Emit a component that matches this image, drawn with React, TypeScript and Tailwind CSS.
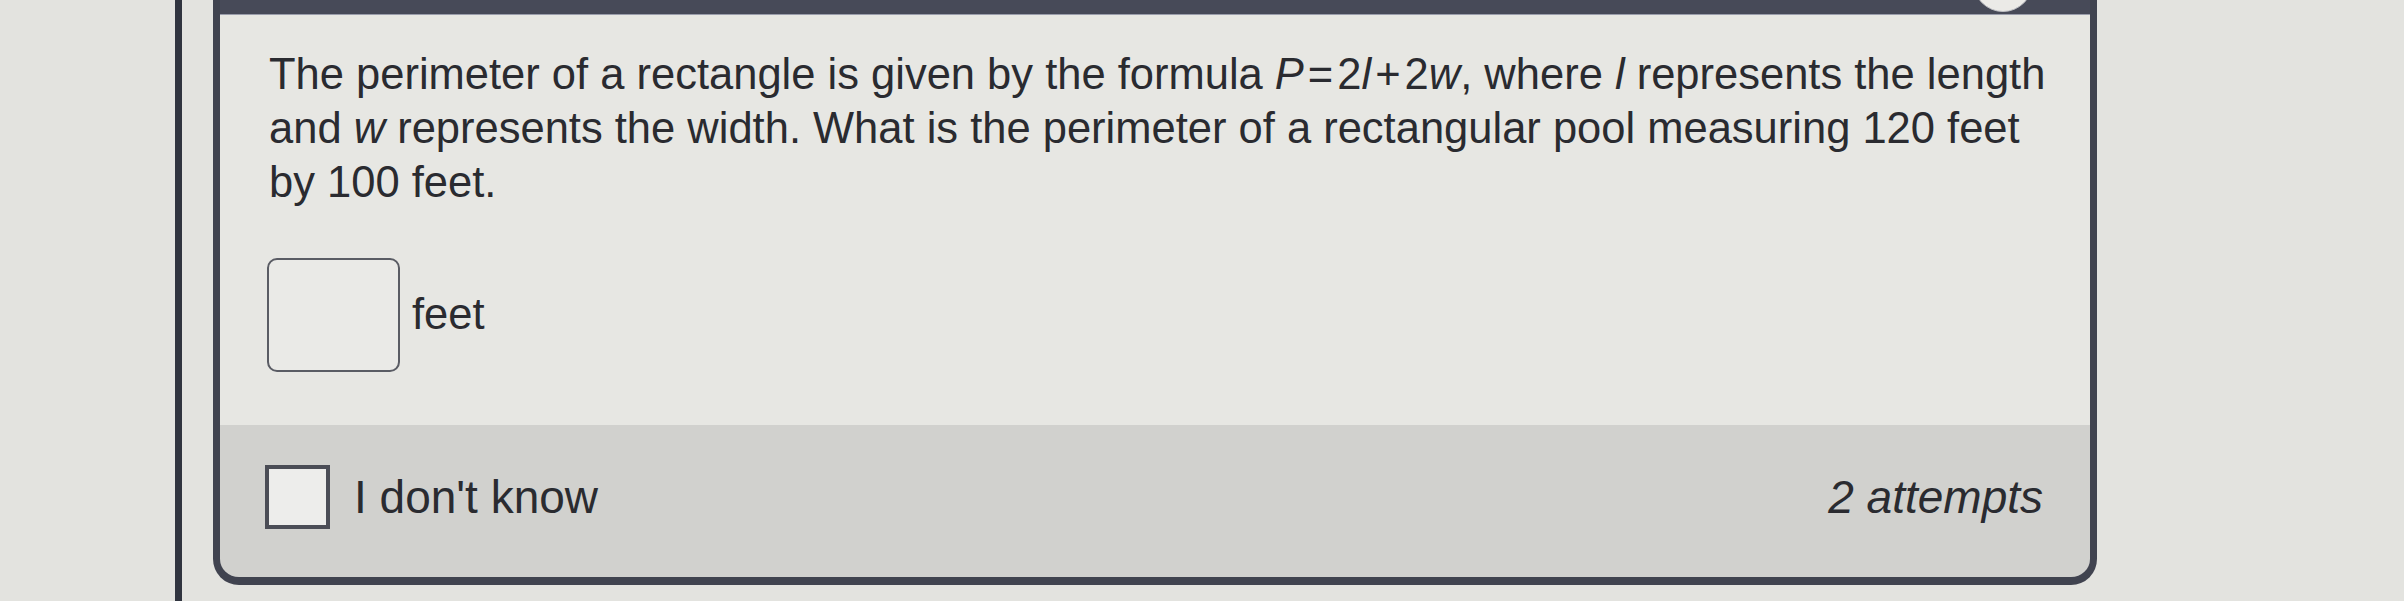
export default function App() {
  return (
    <div className="w-[2404px] h-[601px] overflow-hidden bg-[#e3e3df] flex font-['Liberation_Sans',Arial,sans-serif] text-[#2a2b30]">
      <div className="w-[175px] shrink-0" />
      <div className="w-[7px] shrink-0 bg-[#30343f]" />
      <div className="w-[31px] shrink-0" />
      <QuestionCard />
    </div>
  );
}

function QuestionCard() {
  return (
    <div className="w-[1884px] shrink-0 self-start -mt-[30px] bg-[#474a58] border-x-[7px] border-b-[8px] border-[#40434f] rounded-b-[26px] overflow-hidden">
      {/* Header strip, mostly cut off by the top of the screen */}
      <div className="relative h-[44px]">
        <div className="absolute left-[1753px] -top-[18px] w-[60px] h-[60px] rounded-full bg-[#ebeae7] border border-[#bfc0c4]" />
      </div>

      {/* Question */}
      <div className="bg-[#e7e7e3] pt-[33px] pl-[47px] pr-[10px] pb-[53px] shadow-[inset_0_1px_0_#9a9dab]">
        <div className="text-[43.5px] leading-[54px] pl-[2px] whitespace-nowrap">
          <div>
            The perimeter of a rectangle is given by the formula <i>P</i>
            <span className="mx-[4px]">=</span>2<i>l</i>
            <span className="mx-[4px]">+</span>2<i>w</i>, where <i>l</i> represents the length
          </div>
          <div>
            and <i>w</i> represents the width. What is the perimeter of a rectangular pool measuring 120 feet
          </div>
          <div>by 100 feet.</div>
        </div>

        <div className="flex items-start mt-[49px]">
          <div className="w-[133px] h-[114px] rounded-[10px] border-2 border-[#5a5c64] bg-[#eaeae7]" />
          <span className="ml-[12px] mt-[29px] text-[43.5px] leading-[54px]">feet</span>
        </div>
      </div>

      {/* Footer */}
      <div className="bg-[#d1d1ce] pt-[40px] pb-[48px] pl-[45px] pr-[47px] flex items-center justify-between">
        <label className="flex items-center gap-[24px]">
          <span className="w-[65px] h-[64px] border-[4px] border-[#4b4d56] bg-[#ededeb]" />
          <span className="text-[46px] leading-[54px]">I don't know</span>
        </label>
        <span className="text-[46px] leading-[54px] italic">2 attempts</span>
      </div>
    </div>
  );
}
